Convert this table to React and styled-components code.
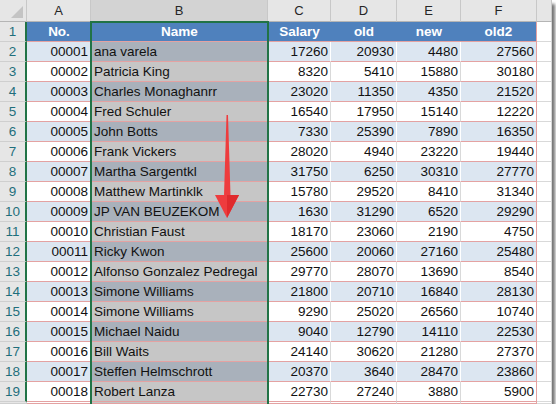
import React from 'react';
import styled, { createGlobalStyle } from 'styled-components';

const GlobalStyle = createGlobalStyle`
  html, body {
    margin: 0;
    padding: 0;
    background: #ffffff;
  }
  body {
    font-family: "Liberation Sans", Arial, sans-serif;
  }
`;

const COLS = ['A', 'B', 'C', 'D', 'E', 'F', ''];
const WIDTHS = '27px 64px 177px 63px 66px 64px 76px 15px';

const rows = [
  ['00001', 'ana varela', 17260, 20930, 4480, 27560],
  ['00002', 'Patricia King', 8320, 5410, 15880, 30180],
  ['00003', 'Charles Monaghanrr', 23020, 11350, 4350, 21520],
  ['00004', 'Fred Schuler', 16540, 17950, 15140, 12220],
  ['00005', 'John Botts', 7330, 25390, 7890, 16350],
  ['00006', 'Frank Vickers', 28020, 4940, 23220, 19440],
  ['00007', 'Martha Sargentkl', 31750, 6250, 30310, 27770],
  ['00008', 'Matthew Martinklk', 15780, 29520, 8410, 31340],
  ['00009', 'JP VAN BEUZEKOM', 1630, 31290, 6520, 29290],
  ['00010', 'Christian Faust', 18170, 23060, 2190, 4750],
  ['00011', 'Ricky Kwon', 25600, 20060, 27160, 25480],
  ['00012', 'Alfonso Gonzalez Pedregal', 29770, 28070, 13690, 8540],
  ['00013', 'Simone Williams', 21800, 20710, 16840, 28130],
  ['00014', 'Simone Williams', 9290, 25020, 26560, 10740],
  ['00015', 'Michael Naidu', 9040, 12790, 14110, 22530],
  ['00016', 'Bill Waits', 24140, 30620, 21280, 27370],
  ['00017', 'Steffen Helmschrott', 20370, 3640, 28470, 23860],
  ['00018', 'Robert Lanza', 22730, 27240, 3880, 5900],
];

const Sheet = styled.div`
  position: relative;
  width: 552px;
  display: grid;
  grid-template-columns: ${WIDTHS};
  grid-template-rows: 22px repeat(19, 20px) 2px;
  background: #ffffff;
  box-shadow: 3px 4px 3px rgba(0, 0, 0, 0.55);
  font-size: 13.5px;
  color: #111111;
`;

const Corner = styled.div`
  position: relative;
  background: #e6e6e6;
  border-right: 1px solid #c8c8c8;
  border-bottom: 1px solid #b5b5b5;
  &::after {
    content: '';
    position: absolute;
    right: 3px;
    bottom: 3px;
    border-style: solid;
    border-width: 0 0 12px 12px;
    border-color: transparent transparent #c4c4c4 transparent;
  }
`;

const ColHead = styled.div`
  display: flex;
  align-items: center;
  justify-content: center;
  background: ${(p) => (p.$active ? '#d3d3d3' : '#e6e6e6')};
  border-right: 1px solid #c8c8c8;
  border-bottom: 1px solid ${(p) => (p.$active ? '#217346' : '#b5b5b5')};
  color: #262626;
  font-size: 13px;
`;

const RowHead = styled.div`
  display: flex;
  align-items: center;
  justify-content: center;
  background: #e6e6e6;
  border-bottom: 1px solid #cfcfcf;
  border-right: ${(p) => (p.$active ? '2px solid #217346' : '1px solid #c8c8c8')};
  color: #1f6f7c;
  font-size: 13.5px;
`;

const HeadCell = styled.div`
  display: flex;
  align-items: center;
  justify-content: center;
  background: #4f81bd;
  color: #ffffff;
  font-weight: bold;
  border-bottom: 1px solid #e4a2a2;
  border-right: ${(p) => (p.$edge ? '1px solid #e4a2a2' : 'none')};
`;

const Cell = styled.div`
  display: flex;
  align-items: center;
  justify-content: ${(p) => (p.$left ? 'flex-start' : 'flex-end')};
  padding: 0 ${(p) => (p.$left ? '3px' : '2px')};
  white-space: nowrap;
  overflow: hidden;
  background: ${(p) => {
    if (p.$sel) return p.$band ? '#a9b1bb' : '#c6c6c6';
    return p.$band ? '#dce6f1' : '#ffffff';
  }};
  border-bottom: 1px solid #e4a2a2;
  border-right: 1px solid ${(p) => (p.$edge ? '#e4a2a2' : p.$band ? '#ffffff' : '#d9d9d9')};
`;

const Spare = styled.div`
  background: #ffffff;
  border-bottom: 1px solid #d9d9d9;
  border-right: 1px solid #d9d9d9;
`;

/* absolute child of the grid: uses the B1:B19 area as its box, takes no cells */
const Selection = styled.div`
  position: absolute;
  grid-column: 3 / 4;
  grid-row: 2 / 22;
  top: -1px;
  left: -1px;
  right: -1px;
  bottom: 0;
  border: 2px solid #217346;
  border-bottom: none;
  pointer-events: none;
  z-index: 2;
`;

const Arrow = styled.svg`
  position: absolute;
  left: 213px;
  top: 113px;
  z-index: 3;
`;

function DownArrow() {
  return (
    <Arrow width="28" height="108" viewBox="0 0 28 108">
      <polygon points="13.5,2 15,2 17.5,83 11,83" fill="#ee3c3e" />
      <polygon points="2,82 26,82 14,105" fill="#ee3c3e" />
      <polygon points="14,82 26,82 14,105" fill="#e02a2d" />
    </Arrow>
  );
}

export default function App() {
  return (
    <>
      <GlobalStyle />
      <Sheet>
        <Corner />
        {COLS.map((c, i) => (
          <ColHead key={`h${i}`} $active={c === 'B'}>
            {c}
          </ColHead>
        ))}

        <RowHead $active>1</RowHead>
        <HeadCell>No.</HeadCell>
        <HeadCell>Name</HeadCell>
        <HeadCell>Salary</HeadCell>
        <HeadCell>old</HeadCell>
        <HeadCell>new</HeadCell>
        <HeadCell $edge>old2</HeadCell>
        <Spare />

        {rows.map((r, i) => {
          const band = i % 2 === 0;
          return (
            <React.Fragment key={r[0]}>
              <RowHead $active>{i + 2}</RowHead>
              <Cell $band={band}>{r[0]}</Cell>
              <Cell $band={band} $sel $left>
                {r[1]}
              </Cell>
              <Cell $band={band}>{r[2]}</Cell>
              <Cell $band={band}>{r[3]}</Cell>
              <Cell $band={band}>{r[4]}</Cell>
              <Cell $band={band} $edge>
                {r[5]}
              </Cell>
              <Spare />
            </React.Fragment>
          );
        })}

        <RowHead />
        <Cell />
        <Cell $sel />
        <Cell />
        <Cell />
        <Cell />
        <Cell $edge />
        <Spare />

        <Selection />
        <DownArrow />
      </Sheet>
    </>
  );
}
